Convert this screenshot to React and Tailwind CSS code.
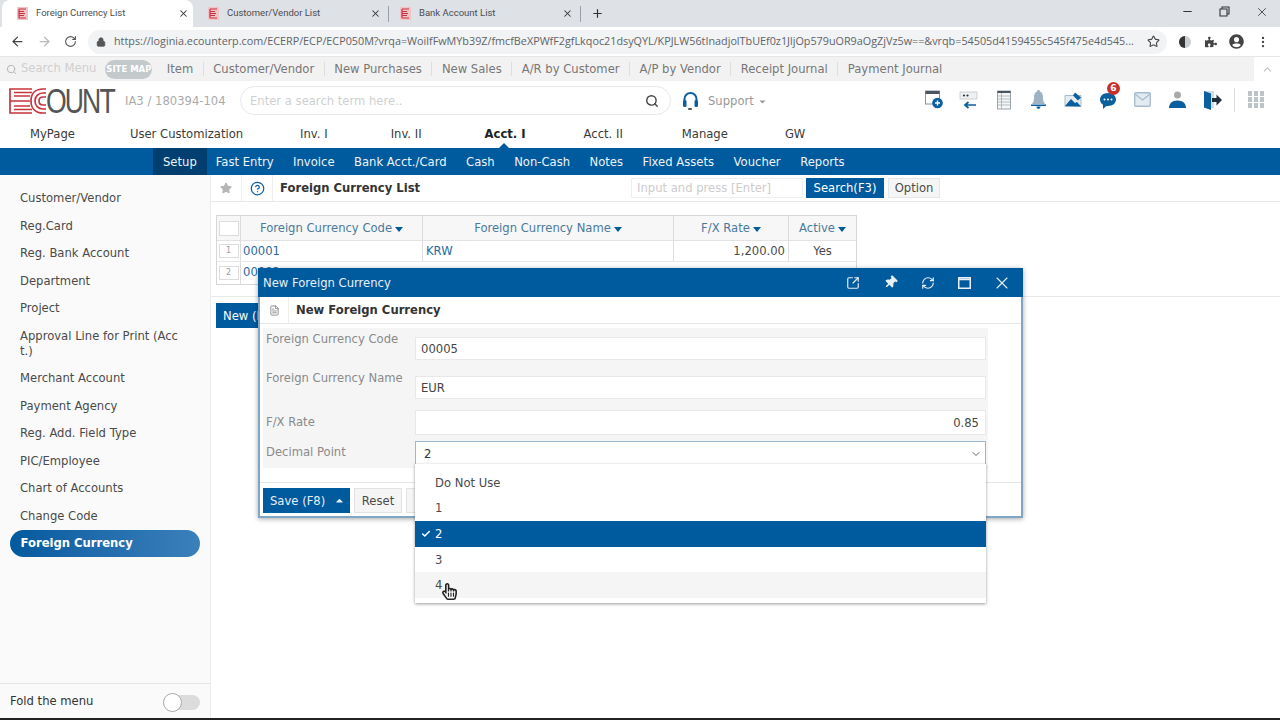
import { ArrowLeft, ArrowRight, RotateCw, Lock, Star, EllipsisVertical, Minus, X, Plus, Search, ChevronUp, ChevronDown, SquareArrowOutUpRight, RefreshCw, CircleHelp, FileText, Check } from "lucide-react";
import { FaUserCircle, FaPuzzlePiece, FaStar, FaThumbtack, FaRegHandPointer, FaCaretDown, FaCaretUp } from "react-icons/fa";

const favs = ["Item", "Customer/Vendor", "New Purchases", "New Sales", "A/R by Customer", "A/P by Vendor", "Receipt Journal", "Payment Journal"];
const subMenu = ["Fast Entry", "Invoice", "Bank Acct./Card", "Cash", "Non-Cash", "Notes", "Fixed Assets", "Voucher", "Reports"];
const side = ["Customer/Vendor", "Reg.Card", "Reg. Bank Account", "Department", "Project", "Approval Line for Print (Acct.)", "Merchant Account", "Payment Agency", "Reg. Add. Field Type", "PIC/Employee", "Chart of Accounts", "Change Code"];

function Favicon() {
  return (
    <svg width="11" height="13" viewBox="0 0 11 13" className="shrink-0">
      <rect width="11" height="13" fill="#f0c3c7" />
      <path d="M2 2h7M2 4.5h5M2 6.5h6M2 8.5h5M2 11h7M2 2v9" stroke="#c8323c" strokeWidth="1.2" fill="none" />
    </svg>
  );
}

function Tab({ title, active, w }) {
  return (
    <div className={`flex items-center h-full pl-[15px] pr-[4px] gap-[8px] ${w} ${active ? "bg-white rounded-t-lg" : ""}`}>
      <Favicon />
      <span className="flex-1 text-[9.5px] text-[#4a4d52] truncate">{title}</span>
      <X size={11} strokeWidth={2.2} className="text-[#333]" />
    </div>
  );
}

function Caret() {
  return <span className="inline-block ml-[3px] w-0 h-0 border-x-[4.5px] border-x-transparent border-t-[5px] border-t-[#005a9e]" />;
}

function TopIcons() {
  return (
    <div className="flex items-center text-[#0b5f9f]">
      <div className="w-[34.75px] flex justify-center">
        <svg width="18" height="19" viewBox="0 0 18 19">
          <rect x=".5" y="1" width="14" height="13" fill="#fff" stroke="#8a949c" />
          <rect x=".5" y="1" width="14" height="3" fill="#4a5560" />
          <circle cx="12.5" cy="13" r="5.3" fill="#0b5f9f" />
          <path d="M12.5 10.5v5M10 13h5" stroke="#fff" strokeWidth="1.4" />
        </svg>
      </div>
      <div className="w-[34.75px] flex justify-center">
        <svg width="19" height="18" viewBox="0 0 19 18">
          <rect x="1" y="1" width="17" height="7" fill="#eef0f2" stroke="#c4c9ce" strokeWidth=".8" />
          <circle cx="5" cy="4.5" r="1.1" fill="#333" />
          <circle cx="8.5" cy="4.5" r="1.1" fill="#333" />
          <path d="M17 14H6M9.5 11 6 14l3.5 3" stroke="#0b5f9f" strokeWidth="1.7" fill="none" />
        </svg>
      </div>
      <div className="w-[34.75px] flex justify-center">
        <svg width="14" height="20" viewBox="0 0 14 20">
          <rect x=".5" y="1" width="13" height="18" fill="#f4f6f7" stroke="#9aa3aa" />
          <rect x=".5" y="1" width="13" height="2" fill="#4a5560" />
          <path d="M1 6h12M1 9h12M1 12h12M1 15h12M4.5 3v16" stroke="#9aa3aa" strokeWidth=".7" />
        </svg>
      </div>
      <div className="w-[34.75px] flex justify-center">
        <svg width="15" height="19" viewBox="0 0 15 19">
          <path d="M7.5 0c1 0 1.5.7 1.5 1.6C11.5 2.4 12 5 12 8c0 3 1 5 2 6H1c1-1 2-3 2-6 0-3 .5-5.6 3-6.4C6 .7 6.5 0 7.5 0z" fill="#9db2c3" />
          <path d="M0 14.500h15V16H0z" fill="#0b5f9f" />
          <path d="M5.500 16.500h4c0 1.500-1 2.500-2 2.500s-2-1-2-2.500z" fill="#0b5f9f" />
        </svg>
      </div>
      <div className="w-[34.75px] flex justify-center">
        <svg width="18" height="16" viewBox="0 0 18 16">
          <path d="M1 3.500h16v11H1z" fill="#e4ebf1" stroke="#a9bccb" />
          <path d="M1 14 7 7l4 4 2-1 4 4.500z" fill="#0b5f9f" />
          <path d="m11 .5 6 5-3 3-5-5z" fill="#0b5f9f" />
        </svg>
      </div>
      <div className="w-[34.75px] flex justify-center">
        <div className="relative">
          <svg width="18" height="18" viewBox="0 0 18 18" className="mt-[3px]">
            <path d="M9 1c4.500 0 8 2.800 8 6.500S13.500 14 9 14c-.6 0-1.200 0-1.700-.1L4 17v-4.200C2.200 11.600 1 9.700 1 7.500 1 3.800 4.500 1 9 1z" fill="#0b5f9f" />
            <circle cx="5.500" cy="7.500" r="1" fill="#fff" />
            <circle cx="9" cy="7.500" r="1" fill="#fff" />
            <circle cx="12.500" cy="7.500" r="1" fill="#fff" />
          </svg>
          <span className="absolute -top-[7px] left-[8px] w-[13px] h-[13px] rounded-full bg-[#c9302c] text-white text-[9px] font-bold leading-[13px] text-center">6</span>
        </div>
      </div>
      <div className="w-[34.75px] flex justify-center">
        <svg width="17" height="15" viewBox="0 0 17 15">
          <rect x=".75" y=".75" width="15.500" height="13.500" rx="1" fill="#e3eaf0" stroke="#a6bccd" strokeWidth="1.300" />
          <path d="m1 2 7.500 6L16 2" stroke="#a6bccd" strokeWidth="1.200" fill="none" />
        </svg>
      </div>
      <div className="w-[34.75px] flex justify-center">
        <svg width="17" height="17" viewBox="0 0 17 17">
          <circle cx="8.500" cy="4" r="3.500" fill="#a7a9ab" />
          <path d="M0 17c0-4.500 3-7.500 8.500-7.500S17 12.500 17 17z" fill="#0b5f9f" />
        </svg>
      </div>
      <div className="w-[34.75px] flex justify-center">
        <svg width="19" height="20" viewBox="0 0 19 20">
          <path d="M1 1h10v17H1z" fill="#cfe0ec" />
          <path d="M1 1l7 2.500V20l-7-2.500z" fill="#0b5f9f" />
          <path d="M9 8h4.500V4.500L19 10l-5.500 5.500V12H9z" fill="#222f3a" />
        </svg>
      </div>
      <div className="ml-[4px] w-px h-[24px] bg-[#dcdcdc]" />
      <div className="ml-[13px] grid grid-cols-3 gap-[1.500px]">
        {[0, 1, 2, 3, 4, 5, 6, 7, 8].map((i) => (
          <div key={i} className="w-[4.500px] h-[4.500px] bg-[#bcc4ca]" />
        ))}
      </div>
    </div>
  );
}

function Logo() {
  return (
    <div className="flex items-center h-[28px] w-[106px] shrink-0">
      <svg width="38" height="26" viewBox="0 0 38 26" className="shrink-0">
        <g stroke="#c8343c" strokeWidth="1.700" fill="none">
          <path d="M23 1H1v24h22M23 4.500H5M5 8h16M1 13h20M5 18h16M23 21.500H5" />
          <path d="M37 1h-3c-8 0-12 5-12 12s4 12 12 12h3M37 5h-3c-5 0-8 3.500-8 8s3 8 8 8h3M37 9h-3c-2.500 0-4 1.800-4 4s1.500 4 4 4h3" />
        </g>
      </svg>
      <span className="font-['Liberation_Sans',sans-serif] text-[35px] leading-none text-[#555] tracking-[-2.500px] scale-x-[.76] origin-left whitespace-nowrap -ml-[1px]">OUNT</span>
    </div>
  );
}

function FormRow({ label, value, className }) {
  return (
    <div className={`flex ${className}`}>
      <div className="w-[152px] pl-[3px] text-[#8a8a8a] -mt-[5px]">{label}</div>
      <div className="w-[571px] h-[23px] bg-white border border-[#e8e8e8] leading-[23px] px-[5px] text-[#444]">{value}</div>
    </div>
  );
}

export default function App() {
  return (
    <div className="relative w-[1280px] h-[720px] overflow-hidden bg-white flex flex-col font-['DejaVu_Sans',sans-serif] text-[11.6px] text-[#4a4a4a]">
      {/* browser chrome */}
      <div className="h-[27px] bg-[#dee1e6] flex items-stretch pl-[2px] font-['Roboto',sans-serif] shrink-0">
        <Tab title="Foreign Currency List" active w="w-[191px]" />
        <Tab title="Customer/Vendor List" w="w-[192px]" />
        <div className="w-px h-[16px] bg-[#9aa0a6] self-center ml-[3px] -mr-[4px]" />
        <Tab title="Bank Account List" w="w-[192px]" />
        <div className="w-px h-[16px] bg-[#9aa0a6] self-center ml-[3px]" />
        <Plus size={13} strokeWidth={2.2} className="self-center ml-[10px] text-[#333]" />
        <div className="flex-1" />
        <div className="flex items-start pt-[5px] gap-[25px] pr-[11px] text-[#333]">
          <Minus size={13} />
          <svg width="11" height="11" viewBox="0 0 11 11" className="mt-[1px]">
            <path d="M1 3h7v7H1zM3 3V1h7v7H8" fill="none" stroke="#333" strokeWidth="1.100" />
          </svg>
          <X size={14} strokeWidth={1.400} />
        </div>
      </div>
      <div className="h-[29px] bg-white flex items-center shrink-0 font-['Open_Sans',sans-serif] text-[#5f6368]">
        <ArrowLeft size={15} className="ml-[10px] text-[#444]" />
        <ArrowRight size={15} className="ml-[12px] text-[#b5b8bc]" />
        <RotateCw size={13} className="ml-[12px] text-[#555]" />
        <div className="ml-[11px] w-[1079px] h-[24px] rounded-full bg-[#f1f3f4] flex items-center pl-[8px] pr-[7px]">
          <Lock size={10} fill="#555" className="text-[#555] shrink-0" />
          <span className="ml-[8px] w-[1020px] shrink-0 text-[10.800px] whitespace-nowrap">https://loginia.ecounterp.com/ECERP/ECP/ECP050M?vrqa=WoilfFwMYb39Z/fmcfBeXPWfF2gfLkqoc21dsyQYL/KPJLW56tInadjolTbUEf0z1JljOp579uOR9aOgZjVz5w==&vrqb=54505d4159455c545f475e4d545...</span>
          <div className="flex-1" />
          <Star size={13} className="text-[#444] shrink-0" />
        </div>
        <svg width="14" height="14" viewBox="0 0 14 14" className="ml-[11px]">
          <circle cx="7" cy="7" r="6" fill="#c9ccd0" />
          <path d="M7 1a6 6 0 0 0 0 12z" fill="#333" />
        </svg>
        <FaPuzzlePiece size={12} className="ml-[13px] text-[#444]" />
        <FaUserCircle size={15} className="ml-[12px] text-[#444]" />
        <EllipsisVertical size={14} className="ml-[12px] text-[#444]" />
      </div>

      {/* favourites */}
      <div className="h-[25px] flex shrink-0 border-t border-[#e6e6e6]">
        <div className="w-[1254px] bg-[#f2f2f2] flex items-center text-[#777]">
          <Search size={11} className="ml-[6px] text-[#b0b0b0]" />
          <span className="ml-[4px] text-[#cfcfcf] whitespace-nowrap">Search Menu</span>
          <span className="ml-[9px] w-[47px] h-[19px] leading-[19px] rounded-full bg-[#c4c9cc] text-white text-[8.500px] font-bold text-center whitespace-nowrap">SITE MAP</span>
          <div className="flex items-center ml-[5px]">
            {favs.map((f, i) => (
              <span key={f} className={`px-[9.500px] leading-[14px] whitespace-nowrap ${i < 7 ? "border-r border-[#dedede]" : ""}`}>{f}</span>
            ))}
          </div>
        </div>
        <div className="flex-1 flex items-center justify-center">
          <ChevronUp size={13} className="text-[#c0c0c0]" />
        </div>
      </div>

      {/* logo and search row */}
      <div className="h-[39px] flex items-center pl-[9px] pr-[16px] shrink-0">
        <Logo />
        <span className="ml-[10px] text-[#aaa] w-[105px] shrink-0 whitespace-nowrap pt-[2px]">IA3 / 180394-104</span>
        <div className="ml-[10px] w-[431px] h-[29px] rounded-full border border-[#e8e8e8] flex items-center pl-[9px] pr-[11px] shrink-0">
          <span className="flex-1 text-[#d0d0d0] pt-[2px]">Enter a search term here..</span>
          <Search size={14} strokeWidth={2.400} className="text-[#444]" />
        </div>
        <svg width="17" height="20" viewBox="0 0 17 20" className="ml-[11px] shrink-0">
          <path d="M2.500 11V8a6 6 0 0 1 12 0v3" fill="none" stroke="#0b5f9f" strokeWidth="2" />
          <rect x="1" y="9" width="3.500" height="7" rx="1.500" fill="#0b5f9f" />
          <rect x="12.500" y="9" width="3.500" height="7" rx="1.500" fill="#0b5f9f" />
          <rect x="6" y="17" width="4" height="2" rx="1" fill="#555" />
        </svg>
        <span className="ml-[9px] text-[#999] pt-[2px]">Support</span>
        <FaCaretDown size={9} className="ml-[4px] text-[#999] mt-[2px]" />
        <div className="ml-auto -mt-[2px]">
          <TopIcons />
        </div>
      </div>

      {/* main nav */}
      <div className="h-[28px] relative shrink-0 flex items-center text-[#3a3a3a] pt-[1px]">
        <span className="ml-[30px]">MyPage</span>
        <span className="ml-[55px]">User Customization</span>
        <span className="ml-[57px]">Inv. I</span>
        <span className="ml-[63px]">Inv. II</span>
        <span className="ml-[63px] font-bold text-[#222]">Acct. I</span>
        <span className="ml-[58px]">Acct. II</span>
        <span className="ml-[59px]">Manage</span>
        <span className="ml-[57px]">GW</span>
        <div className="absolute left-[499px] bottom-0 w-0 h-0 border-x-[5px] border-x-transparent border-b-[5px] border-b-[#005a9e]" />
      </div>
      <div className="h-[27px] bg-[#005a9e] flex items-stretch pl-[153px] shrink-0 text-[#eef4f9] leading-[29px]">
        <span className="bg-[#003f70] px-[10px]">Setup</span>
        <div className="flex items-center gap-[19.500px] ml-[9px] pt-[1px]">
          {subMenu.map((m) => (
            <span key={m} className="leading-[14px]">{m}</span>
          ))}
        </div>
      </div>

      {/* body */}
      <div className="flex flex-1 min-h-0 mb-[2px]">
        <aside className="w-[211px] shrink-0 bg-[#fafafa] border-r border-[#ececec] flex flex-col">
          <div className="flex-1 pt-[10px] px-[10px]">
            {side.map((s) => (
              <div key={s} className="pl-[10px] pr-[18px] py-[6.250px] leading-[15px] break-all">{s}</div>
            ))}
            <div className="h-[27px] rounded-full bg-gradient-to-r from-[#005a9e] to-[#3a80bb] text-white font-bold leading-[27px] px-[10.500px]">Foreign Currency</div>
          </div>
          <div className="h-[35px] border-t border-[#e6e6e6] flex items-center pl-[10px] pr-[10px] pt-[2px] justify-between">
            <span className="text-[#333]">Fold the menu</span>
            <div className="relative w-[37px] h-[15px] rounded-full bg-[#dcdcdc]">
              <div className="absolute -left-[0px] -top-[2px] w-[19px] h-[19px] rounded-full bg-white border border-[#aaa]" />
            </div>
          </div>
        </aside>

        <main className="flex-1 min-w-0">
          <div className="h-[27px] border-b border-[#e8e8e8] flex items-center">
            <div className="w-[31px] h-full flex items-center justify-center border-r border-[#eee]">
              <FaStar size={12} className="text-[#b5b5b5]" />
            </div>
            <div className="w-[31px] h-full flex items-center justify-center border-r border-[#eee]">
              <CircleHelp size={15} className="text-[#0b5f9f]" />
            </div>
            <span className="ml-[7px] w-[351px] font-bold text-[#333] pt-[1px]">Foreign Currency List</span>
            <div className="w-[172px] h-[20px] bg-white border border-[#eee] leading-[19px] pl-[5px] text-[#ccc] whitespace-nowrap">Input and press [Enter]</div>
            <div className="ml-[3px] w-[78px] h-[20px] bg-[#005a9e] text-white text-center leading-[20px]">Search(F3)</div>
            <div className="ml-[4px] w-[52px] h-[20px] bg-[#f5f5f5] border border-[#e5e5e5] text-center leading-[19px]">Option</div>
          </div>

          <div className="ml-[5px] mt-[13px] w-[641px] border border-[#d4d8da]">
            <div className="flex h-[25px] bg-[#f7f7f7] border-b border-[#e2e2e2] text-[#4a7a9c]">
              <div className="w-[24px] border-r border-[#ddd] flex items-center justify-center">
                <div className="w-[20px] h-[15px] bg-white border border-[#ddd]" />
              </div>
              <div className="w-[182px] border-r border-[#ddd] flex items-center justify-center pt-[2px]">Foreign Currency Code<Caret /></div>
              <div className="w-[251px] border-r border-[#ddd] flex items-center justify-center pt-[2px]">Foreign Currency Name<Caret /></div>
              <div className="w-[115px] border-r border-[#ddd] flex items-center justify-center pt-[2px]">F/X Rate<Caret /></div>
              <div className="flex-1 flex items-center justify-center pt-[2px]">Active<Caret /></div>
            </div>
            <div className="flex h-[21px] border-b border-[#e8e8e8] items-stretch">
              <div className="w-[24px] border-r border-[#ddd] flex items-center justify-center">
                <div className="w-[20px] h-[14px] border border-[#ddd] text-[8px] text-[#999] leading-[12px] text-center">1</div>
              </div>
              <div className="w-[182px] border-r border-[#ddd] pl-[2px] leading-[21px] text-[#2a6a9e]">00001</div>
              <div className="w-[251px] border-r border-[#ddd] pl-[3px] leading-[21px] text-[#2a6a9e]">KRW</div>
              <div className="w-[115px] border-r border-[#ddd] pr-[3px] leading-[21px] text-right">1,200.00</div>
              <div className="flex-1 text-center leading-[21px]">Yes</div>
            </div>
            <div className="flex h-[22px] items-stretch">
              <div className="w-[24px] border-r border-[#ddd] flex items-center justify-center">
                <div className="w-[20px] h-[14px] border border-[#ddd] text-[8px] text-[#999] leading-[12px] text-center">2</div>
              </div>
              <div className="pl-[2px] leading-[21px] text-[#2a6a9e]">00002</div>
            </div>
          </div>
          <div className="mt-[11px] border-t border-[#e8e8e8] pt-[6px] pl-[5px]">
            <div className="w-[80px] h-[25px] bg-[#005a9e] text-white leading-[26px] pl-[7px]">New (F2)</div>
          </div>
        </main>
      </div>
      <div className="absolute left-0 right-0 bottom-0 h-[2px] bg-[#222]" />

      {/* modal */}
      <div className="absolute left-[258px] top-[268px] w-[765px] h-[250px] bg-white border-x-2 border-b-2 border-[#7fa6c4] shadow-[0_1px_5px_rgba(0,0,0,0.35)] flex flex-col">
        <div className="-mx-[2px] h-[29px] bg-[#005a9e] text-[#e8f0f6] flex items-center pl-[5px] shrink-0">
          <span className="flex-1 pt-[2px]">New Foreign Currency</span>
          <div className="flex items-center pr-[2px]">
            <div className="w-[37.400px] flex justify-center"><SquareArrowOutUpRight size={14} /></div>
            <div className="w-[37.400px] flex justify-center"><FaThumbtack size={13} className="rotate-45" /></div>
            <div className="w-[37.400px] flex justify-center"><RefreshCw size={14} /></div>
            <div className="w-[37.400px] flex justify-center">
              <svg width="13" height="12" viewBox="0 0 13 12"><path d="M.75.75h11.500v10.500H.75zM.75 2.500h11.500" fill="none" stroke="currentColor" strokeWidth="1.500" /></svg>
            </div>
            <div className="w-[37.400px] flex justify-center"><X size={20} strokeWidth={1.300} /></div>
          </div>
        </div>
        <div className="h-[27px] border-b border-[#e6e6e6] flex items-center shrink-0">
          <div className="w-[29px] h-full flex items-center justify-center border-r border-[#eee]">
            <FileText size={11} className="text-[#888]" />
          </div>
          <span className="ml-[7px] font-bold text-[#333] pt-[2px]">New Foreign Currency</span>
        </div>
        <div className="mt-[4px] ml-[3px] w-[725px] h-[140px] bg-[#f5f5f5] shrink-0 pt-[9px] leading-[14px]">
          <FormRow label="Foreign Currency Code" value="00005" className="items-start" />
          <FormRow label="Foreign Currency Name" value="EUR" className="mt-[16px] items-start" />
          <div className="flex mt-[11px] items-center">
            <div className="w-[152px] pl-[3px] text-[#8a8a8a] -mt-[2px]">F/X Rate</div>
            <div className="w-[571px] h-[25px] bg-white border border-[#e8e8e8] leading-[24px] px-[6px] text-[#444] text-right">0.85</div>
          </div>
          <div className="flex mt-[6px] items-start">
            <div className="w-[152px] pl-[3px] text-[#8a8a8a] pt-[4px]">Decimal Point</div>
            <div className="w-[571px] h-[23px] bg-white border border-b-0 border-[#9db8cc] pt-[2px] leading-[22px] pl-[8px] text-[#333] flex items-center justify-between pr-[3px]">
              2
              <ChevronDown size={12} className="text-[#666]" />
            </div>
          </div>
        </div>
        <div className="mt-[14px] border-t border-[#e6e6e6] pt-[5px] pl-[3px] flex gap-[4px]">
          <div className="w-[87px] h-[25px] bg-[#005a9e] text-[#e8f0f6] flex items-center justify-between pl-[7px] pr-[5px]">
            <span className="pt-[2px]">Save (F8)</span>
            <FaCaretUp size={11} />
          </div>
          <div className="w-[48px] h-[25px] bg-[#f5f5f5] border border-[#e2e2e2] text-center leading-[25px]">Reset</div>
          <div className="w-[40px] h-[25px] bg-[#f5f5f5] border border-[#e2e2e2]" />
        </div>
      </div>

      {/* dropdown */}
      <div className="absolute left-[415px] top-[464px] w-[571px] h-[139px] bg-white shadow-[0_1px_3px_rgba(0,0,0,0.4)] pt-[5.600px]">
        {["Do Not Use", "1", "2", "3", "4"].map((o) => (
          <div key={o} className={`h-[25.700px] pl-[20px] leading-[25.700px] relative pt-[1px] ${o === "2" ? "bg-[#005a9e] text-white" : ""} ${o === "4" ? "bg-[#f5f5f5]" : ""}`}>
            {o === "2" && <Check size={10} strokeWidth={3.500} className="absolute left-[6px] top-[8px]" />}
            {o}
          </div>
        ))}
      </div>
      <FaRegHandPointer size={17} className="absolute left-[441px] top-[583px] text-[#222]" />
    </div>
  );
}
